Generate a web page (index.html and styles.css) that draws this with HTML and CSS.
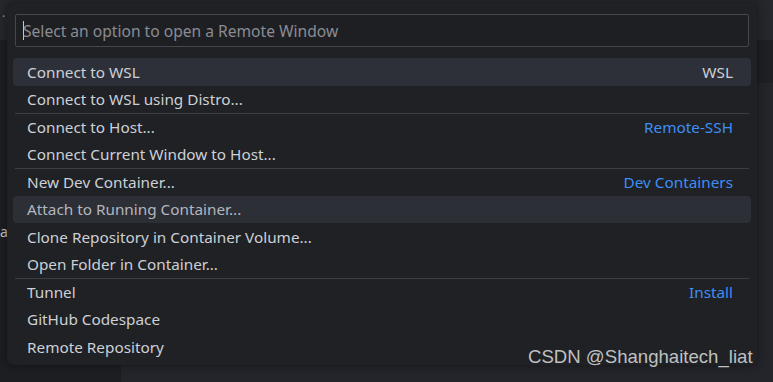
FILE: index.html
```html
<!DOCTYPE html>
<html>
<head>
<meta charset="utf-8">
<link rel="stylesheet" href="styles.css">
</head>
<body>
<div class="workbench">
  <div class="sidebar">
    <div class="sb-top"><span class="dots">· ·</span></div>
    <div class="sb-rest"><span class="sb-a">a</span></div>
  </div>
  <div class="main">
    <div class="main-top"></div>
    <div class="main-band"></div>
    <div class="main-rest"></div>
  </div>
</div>

<div class="quickpick">
  <div class="qp-input">
    <span class="caret"></span><span class="placeholder">Select an option to open a Remote Window</span>
  </div>
  <div class="qp-list">
    <div class="row focused"><span class="label">Connect to WSL</span><span class="detail">WSL</span></div>
    <div class="row"><span class="label">Connect to WSL using Distro...</span></div>
    <div class="row sep"><span class="label">Connect to Host...</span><span class="detail link">Remote-SSH</span></div>
    <div class="row"><span class="label">Connect Current Window to Host...</span></div>
    <div class="row sep"><span class="label">New Dev Container...</span><span class="detail link">Dev Containers</span></div>
    <div class="row hover"><span class="label">Attach to Running Container...</span></div>
    <div class="row"><span class="label">Clone Repository in Container Volume...</span></div>
    <div class="row"><span class="label">Open Folder in Container...</span></div>
    <div class="row sep"><span class="label">Tunnel</span><span class="detail link">Install</span></div>
    <div class="row"><span class="label">GitHub Codespace</span></div>
    <div class="row"><span class="label">Remote Repository</span></div>
  </div>
</div>

<div class="watermark">CSDN @Shanghaitech_liat</div>
</body>
</html>
```

FILE: styles.css
```css
* { box-sizing: border-box; }
html, body {
  margin: 0;
  padding: 0;
  width: 773px;
  height: 382px;
  overflow: hidden;
  background: #1c1e22;
  font-family: "Noto Sans", "Open Sans", sans-serif;
}
.workbench {
  display: flex;
  width: 773px;
  height: 382px;
}
.sidebar {
  width: 121px;
  display: flex;
  flex-direction: column;
  background: #1c1e22;
}
.sb-top {
  height: 40px;
  background: #25272c;
  color: #9da0a6;
  font-size: 12px;
  padding: 8px 0 0 2px;
}
.sb-rest {
  flex: 1;
  position: relative;
}
.sb-a {
  position: absolute;
  left: 0;
  top: 182px;
  color: #c8c8c8;
  font-size: 14px;
}
.main {
  flex: 1;
  display: flex;
  flex-direction: column;
}
.main-top { height: 40px; background: #25272c; }
.main-band { height: 43px; background: #1e2024; }
.main-rest { flex: 1; background: #23252a; }

.quickpick {
  position: absolute;
  left: 7px;
  top: 3px;
  width: 750px;
  height: 362px;
  background: #1f2125;
  border-radius: 7px;
  box-shadow: 0 0 8px rgba(0,0,0,0.45);
  padding: 11px 8px 0 8px;
}
.qp-input {
  height: 33px;
  border: 1px solid #45474e;
  border-radius: 2px;
  background: #1e1f23;
  display: flex;
  align-items: center;
  padding-left: 7px;
}
.caret {
  width: 1px;
  height: 19px;
  background: #c8c8c8;
}
.placeholder {
  color: #8a8c92;
  font-size: 15.6px;
  margin-left: -1px;
}
.qp-list {
  margin: 11px -2px 0 -2px;
  display: flex;
  flex-direction: column;
}
.row {
  height: 27.5px;
  display: flex;
  align-items: center;
  justify-content: space-between;
  padding: 0 18px 0 14px;
  border-radius: 4px;
  position: relative;
  color: #cdd0d6;
  font-size: 15.3px;
}
.row.sep::before {
  content: "";
  position: absolute;
  left: 2px;
  right: 2px;
  top: 0;
  height: 1px;
  background: #3c3e44;
}
.row.focused { background: #2d3039; }
.row.hover { background: #2c2f36; color: #b3b6bd; }
.detail { color: #cdd0d6; }
.detail.link { color: #3d8ef5; }

.watermark {
  position: absolute;
  left: 528px;
  top: 346px;
  color: #bfc0c2;
  font-family: "Liberation Sans", Arial, sans-serif;
  font-size: 18.6px;
}
```
